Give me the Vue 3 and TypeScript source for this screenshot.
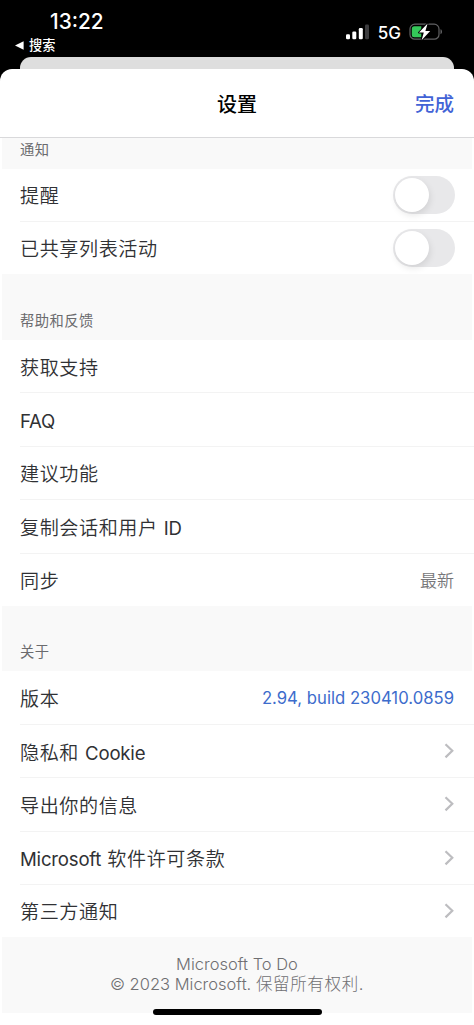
<script setup lang="ts">
import { ref } from 'vue'

interface Row {
  label: string
  kind?: 'toggle' | 'status' | 'link' | 'chevron'
  value?: string
}

interface Section {
  title: string
  rows: Row[]
}

const sections = ref<Section[]>([
  {
    title: '通知',
    rows: [
      { label: '提醒', kind: 'toggle' },
      { label: '已共享列表活动', kind: 'toggle' },
    ],
  },
  {
    title: '帮助和反馈',
    rows: [
      { label: '获取支持' },
      { label: 'FAQ' },
      { label: '建议功能' },
      { label: '复制会话和用户 ID' },
      { label: '同步', kind: 'status', value: '最新' },
    ],
  },
  {
    title: '关于',
    rows: [
      { label: '版本', kind: 'link', value: '2.94, build 230410.0859' },
      { label: '隐私和 Cookie', kind: 'chevron' },
      { label: '导出你的信息', kind: 'chevron' },
      { label: 'Microsoft 软件许可条款', kind: 'chevron' },
      { label: '第三方通知', kind: 'chevron' },
    ],
  },
])

// Splits a label into runs so that Latin and Chinese text get their own tracking.
function runs(label: string): { text: string; latin: boolean }[] {
  return (label.match(/[\x20-\x7e]+|[^\x20-\x7e]+/g) ?? []).map((text) => ({
    text,
    latin: /^[\x20-\x7e]/.test(text),
  }))
}
</script>

<template>
  <div class="screen">
    <div class="status">
      <div class="status-left">
        <div class="time">13:22</div>
        <div class="back">
          <svg width="9" height="9" viewBox="0 0 9 9"><path d="M0 4.5 8.6 .3v8.4z" fill="#fff" /></svg>
          <span>搜索</span>
        </div>
      </div>
      <div class="status-right">
        <svg class="signal" width="24" height="16" viewBox="0 0 24 16">
          <rect x="1" y="10.3" width="4" height="5" rx="1.2" fill="#fff" />
          <rect x="7.3" y="7.5" width="4" height="7.8" rx="1.2" fill="#fff" />
          <rect x="13.800" y="4" width="4" height="11.3" rx="1.2" fill="#fff" />
          <rect x="20" y="0.6" width="4" height="14.7" rx="1.2" fill="#3c3c3e" />
        </svg>
        <span class="network">5G</span>
        <svg class="battery" width="34" height="18" viewBox="0 0 34 18">
          <rect x="1" y="1.2" width="29" height="15" rx="4.8" fill="none" stroke="#626264" stroke-width="1.2" />
          <path d="M31.5 6.3c2 .5 2 4.4 0 4.900z" fill="#626264" />
          <path d="M5.300 3.200h7v11h-7A2.500 2.500 0 0 1 2.800 11.700V5.700A2.500 2.500 0 0 1 5.300 3.200z" fill="#34c759" />
          <path
            d="M18.600.4 10 9.500h4.800l-2.200 7.800 8.600-9.300h-4.800z"
            fill="#fff" stroke="#000" stroke-width="1.800" paint-order="stroke" stroke-linejoin="round"
          />
        </svg>
      </div>
    </div>

    <div class="card-behind"></div>

    <div class="sheet">
      <header class="header">
        <span></span>
        <h1 class="title">设置</h1>
        <button class="done">完成</button>
      </header>

      <main class="content">
        <section v-for="section in sections" :key="section.title" class="section">
          <h2 class="section-title">{{ section.title }}</h2>
          <div v-for="row in section.rows" :key="row.label" class="row">
            <span class="label">
              <span v-for="run in runs(row.label)" :key="run.text" :class="{ latin: run.latin }">{{ run.text }}</span>
            </span>
            <span v-if="row.kind === 'toggle'" class="toggle"><span class="knob"></span></span>
            <span v-else-if="row.kind === 'status'" class="value">{{ row.value }}</span>
            <span v-else-if="row.kind === 'link'" class="value link">{{ row.value }}</span>
            <svg v-else-if="row.kind === 'chevron'" class="chevron" width="10" height="16" viewBox="0 0 10 16">
              <path d="M1.500 1.200 8.300 7.800l-6.800 6.600" fill="none" stroke="#bdbdc0" stroke-width="2.200" />
            </svg>
          </div>
        </section>

        <footer class="footer">
          <div class="product">Microsoft To Do</div>
          <div class="rights">© 2023 Microsoft. <span class="cjk">保留所有权利.</span></div>
        </footer>
      </main>

      <div class="home"><div class="home-bar"></div></div>
    </div>
  </div>
</template>

<style>
body {
  margin: 0;
  background: #000;
}
</style>

<style scoped>
.screen {
  width: 474px;
  height: 1025px;
  overflow: hidden;
  display: flex;
  flex-direction: column;
  background: #000;
  font-family: Inter, 'Noto Sans CJK SC', sans-serif;
  color: #303134;
}
.status {
  height: 57px;
  flex: none;
  display: flex;
  justify-content: space-between;
  color: #fff;
}
.status-left {
  padding-left: 15px;
}
.time {
  margin: 10px 0 0 35px;
  font-size: 20.800px;
  line-height: 24px;
  font-weight: 550;
}
.back {
  display: flex;
  align-items: center;
  gap: 5px;
  height: 22px;
  font-size: 13.200px;
  line-height: 22px;
  font-weight: 500;
}
.status-right {
  display: flex;
  align-items: center;
  height: 18px;
  margin: 23px 31px 0 0;
}
.network {
  margin: 1px 8px 0 9px;
  font-size: 17px;
  line-height: 18px;
  font-weight: 450;
}
.card-behind {
  flex: none;
  height: 12px;
  margin: 0 20px;
  border-radius: 11px 11px 0 0;
  background: #dedede;
}
.sheet {
  flex: 1;
  display: flex;
  flex-direction: column;
  border-radius: 12px 12px 0 0;
  background: #fff;
  overflow: hidden;
}
.header {
  flex: none;
  box-sizing: border-box;
  height: 69px;
  padding: 0 20px;
  display: grid;
  grid-template-columns: 1fr auto 1fr;
  align-items: center;
  border-bottom: 1px solid #d9d9db;
}
.title {
  margin: 0;
  font-size: 20px;
  font-weight: 500;
  color: #000;
}
.done {
  justify-self: end;
  padding: 0 0 1px;
  border: 0;
  background: none;
  font: inherit;
  font-size: 19.500px;
  font-weight: 500;
  color: #4263d6;
}
.section {
  display: flex;
  flex-direction: column;
}
.section-title {
  box-sizing: border-box;
  height: 65.500px;
  margin: 0 2px;
  padding: 35.500px 18px 0;
  background: #f9f9f9;
  font-size: 14.300px;
  line-height: 22px;
  letter-spacing: 0.450px;
  font-weight: 400;
  color: #6b6b6e;
}
.section:first-child .section-title {
  height: 30.700px;
  padding-top: 1px;
}
.row {
  box-sizing: border-box;
  height: 53.400px;
  margin-left: 20px;
  padding-right: 20px;
  display: flex;
  align-items: center;
  justify-content: space-between;
  border-bottom: 1px solid #f3f3f3;
}
.row:last-child {
  height: 52.400px;
  border-bottom-color: transparent;
}
.label {
  padding-top: 3px;
  font-size: 19.100px;
  line-height: 26px;
  letter-spacing: 0.580px;
  font-weight: 350;
  white-space: pre;
}
.label .latin {
  font-size: 18.600px;
  font-weight: 380;
  letter-spacing: -0.200px;
  word-spacing: 1px;
}
.value {
  font-size: 17px;
  font-weight: 350;
  color: #77777a;
}
.value.link {
  color: #3d6ccc;
  font-size: 16.700px;
  font-weight: 400;
}
.toggle {
  box-sizing: border-box;
  width: 62px;
  height: 38px;
  margin-right: -1px;
  padding: 2px 1.500px;
  border-radius: 19px;
  background: #e8e8ea;
}
.knob {
  display: block;
  width: 34px;
  height: 34px;
  border-radius: 50%;
  background: #fff;
  box-shadow: 1px 3px 7px rgba(0, 0, 0, 0.1);
}
.footer {
  box-sizing: border-box;
  height: 75.700px;
  margin: 0 2px;
  padding-top: 17px;
  background: #f9f9f9;
  text-align: center;
  font-size: 16.500px;
  line-height: 20px;
  font-weight: 300;
  color: #6f6f72;
}
.rights .cjk {
  letter-spacing: 0.650px;
}
.home {
  display: flex;
  justify-content: center;
  margin-top: -4px;
}
.home-bar {
  width: 169px;
  height: 6px;
  border-radius: 3px;
  background: #000;
}
</style>
